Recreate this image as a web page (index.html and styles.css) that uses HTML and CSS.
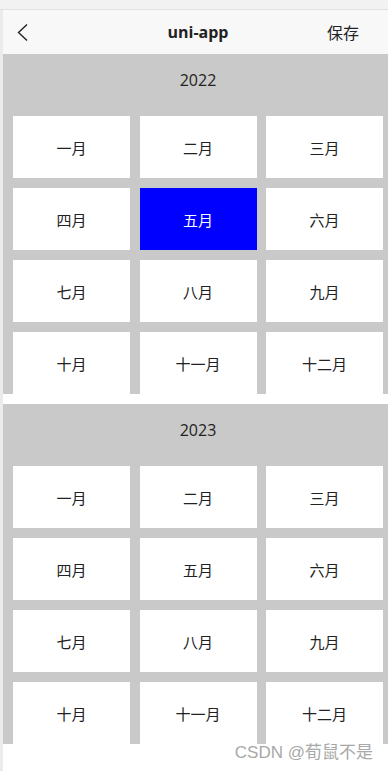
FILE: index.html
```html
<html>
<head>
<meta charset="UTF-8">
<title>uni-app</title>
<link rel="stylesheet" href="styles.css">
</head>
<body>
<div class="top_strip"></div>
<div class="page">
    <div class="nav">
        <span class="back">
            <svg width="13" height="19" viewBox="0 0 13 19"><path d="M11 1.5 L2.5 9.5 L11 17.5" fill="none" stroke="#222" stroke-width="1.4"/></svg>
        </span>
        <span class="title">uni-app</span>
        <span class="save">保存</span>
    </div>

    <div class="year">
        <div class="year_label">2022</div>
        <div class="months">
            <span>一月</span><span>二月</span><span>三月</span>
            <span>四月</span><span class="active">五月</span><span>六月</span>
            <span>七月</span><span>八月</span><span>九月</span>
            <span>十月</span><span>十一月</span><span>十二月</span>
        </div>
    </div>

    <div class="year">
        <div class="year_label">2023</div>
        <div class="months">
            <span>一月</span><span>二月</span><span>三月</span>
            <span>四月</span><span>五月</span><span>六月</span>
            <span>七月</span><span>八月</span><span>九月</span>
            <span>十月</span><span>十一月</span><span>十二月</span>
        </div>
    </div>
</div>
<div class="watermark">CSDN @荀鼠不是</div>
</body>
</html>
```

FILE: styles.css
```css
body {
    margin: 0;
    font-family: "Noto Sans CJK SC", "Noto Sans", sans-serif;
    color: #222;
    background: #fff;
    height: 771px;
    overflow: hidden;
    position: relative;
}

* {
    box-sizing: border-box;
}

.top_strip {
    height: 10px;
    background: #f2f2f2;
    border-bottom: 1px solid #e2e2e2;
}

.page {
    border-left: 3px solid #ebebeb;
    min-height: 761px;
}

.nav {
    height: 44px;
    background: #f8f8f8;
    display: grid;
    grid-template-columns: 1fr auto 1fr;
    align-items: center;
}

.nav .back {
    padding-left: 13px;
    display: flex;
    align-items: center;
}

.nav .title {
    font-family: "Open Sans", "Noto Sans", sans-serif;
    font-weight: bold;
    font-size: 16px;
    padding-left: 5px;
}

.nav .save {
    text-align: right;
    padding-right: 29px;
    font-size: 16px;
}

.year {
    background: #c9c9c9;
    margin-bottom: 10px;
}

.year_label {
    height: 52px;
    line-height: 52px;
    text-align: center;
    padding-left: 5px;
    font-family: "Open Sans", "Noto Sans", sans-serif;
    font-size: 16px;
}

.months {
    display: grid;
    grid-template-columns: repeat(3, 117px);
    column-gap: 9.5px;
    row-gap: 10px;
    padding: 10px 0 0 10px;
}

.months > span {
    height: 62px;
    background: #fff;
    display: flex;
    align-items: center;
    justify-content: center;
    font-size: 15px;
}

.months > span.active {
    background: #0000ff;
    color: #fff;
}

.watermark {
    position: absolute;
    right: 15px;
    bottom: 8px;
    font-family: "Liberation Sans", "Noto Sans CJK SC", sans-serif;
    font-size: 17px;
    color: #a8a8a8;
}
```
